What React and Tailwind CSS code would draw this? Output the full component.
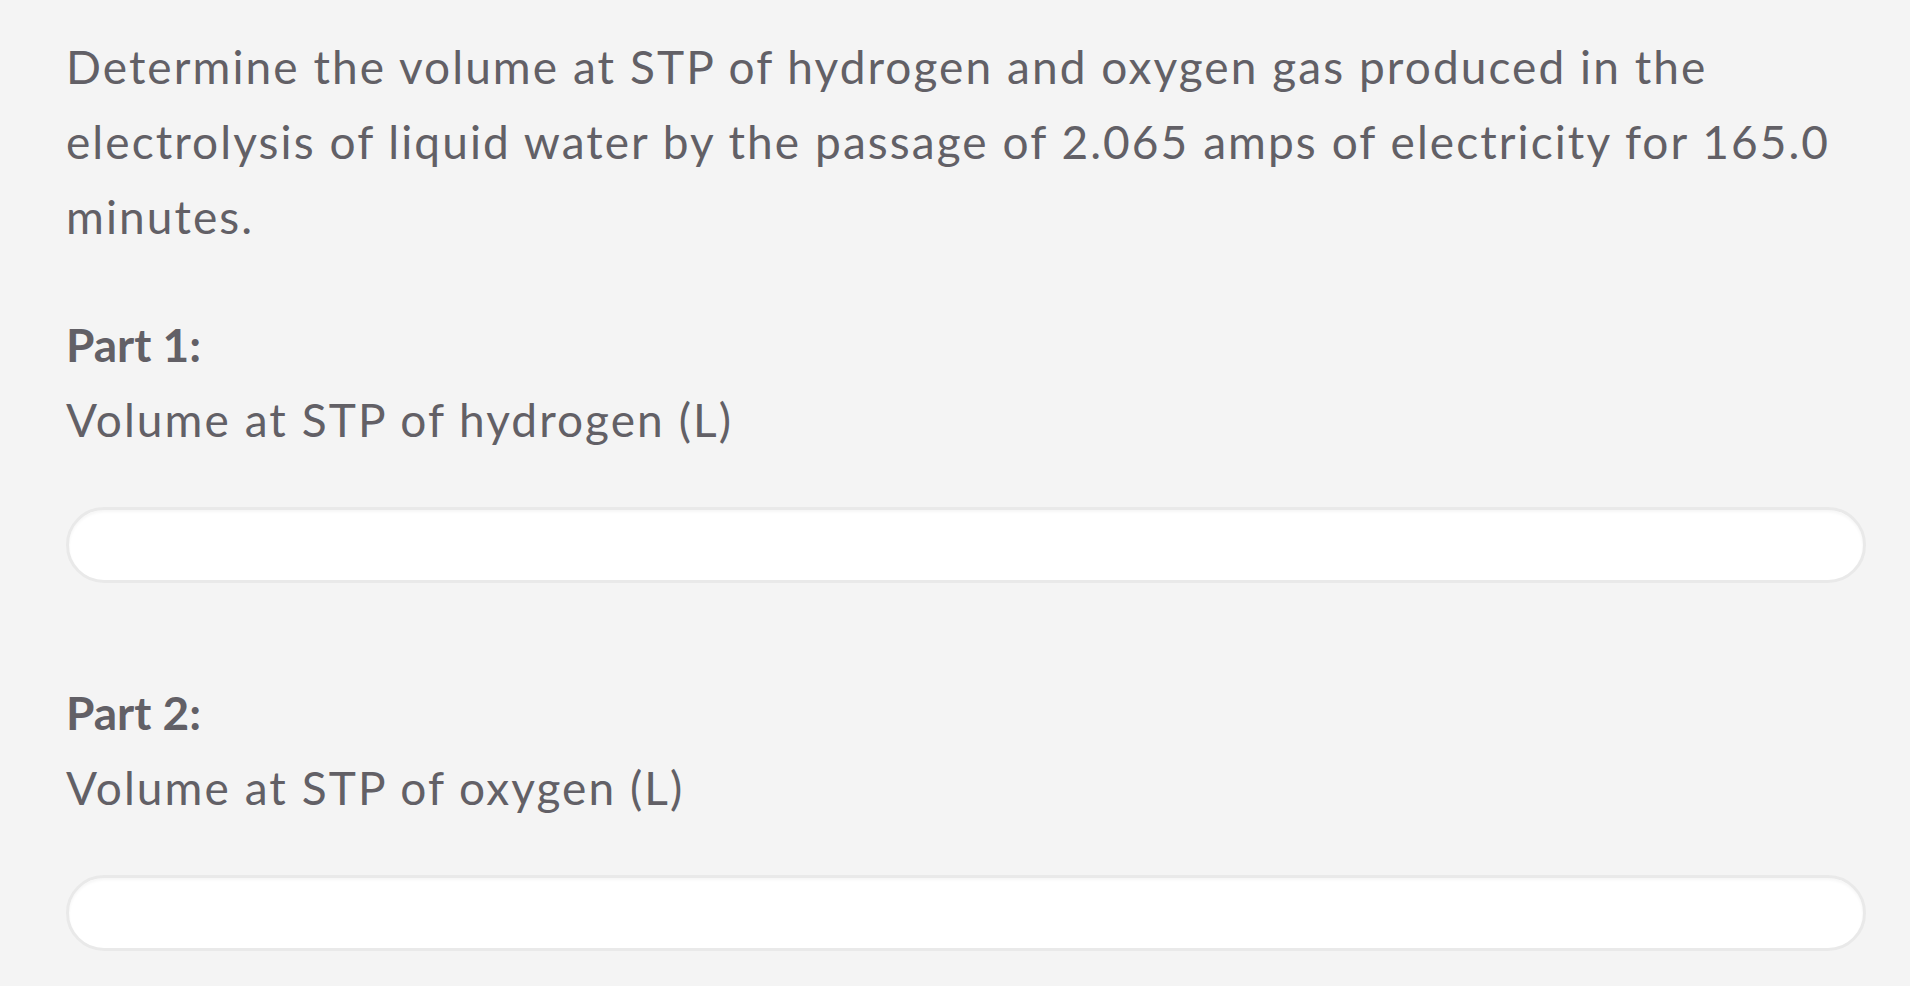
export default function App() {
  const parts = [
    { label: 'Part 1:', prompt: 'Volume at STP of hydrogen (L)' },
    { label: 'Part 2:', prompt: 'Volume at STP of oxygen (L)' },
  ];

  return (
    <div className="min-h-screen bg-[#f4f4f4] text-[#626066] font-['Lato',sans-serif]">
      <div className="pl-[66px] pr-[44px] pt-[29px] pb-10">
        <p className="text-[46px] leading-[75px] tracking-[0.045em]">
          Determine the volume at STP of hydrogen and oxygen gas produced in the electrolysis of liquid water by the passage of 2.065 amps of electricity for 165.0 minutes.
        </p>

        <div className="mt-[53px] flex flex-col gap-[92px]">
          {parts.map((part) => (
            <div key={part.label} className="flex flex-col">
              <div className="text-[46px] leading-[75px] font-bold">{part.label}</div>
              <div className="text-[46px] leading-[75px] tracking-[0.045em]">{part.prompt}</div>
              <input
                type="text"
                className="mt-[50px] h-[76px] w-full rounded-full border-[3px] border-[#e9e9e9] bg-white px-8 text-[40px] outline-none shadow-[inset_0_2px_3px_rgba(0,0,0,0.04)]"
              />
            </div>
          ))}
        </div>
      </div>
    </div>
  );
}
